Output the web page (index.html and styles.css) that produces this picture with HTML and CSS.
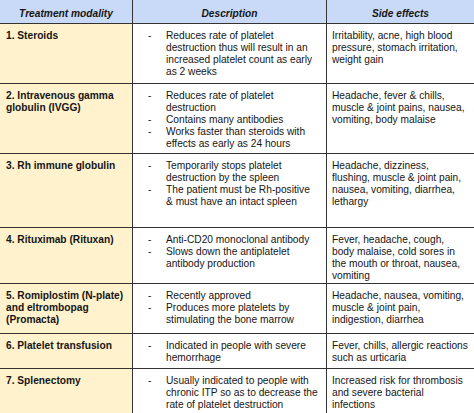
FILE: index.html
```html
<!DOCTYPE html>
<html>
<head>
<meta charset="utf-8">
<link rel="stylesheet" href="styles.css">
</head>
<body>
<table class="itp">
  <colgroup>
    <col class="c-mod">
    <col class="c-desc">
    <col class="c-side">
  </colgroup>
  <thead>
    <tr class="h0">
      <th>Treatment modality</th>
      <th>Description</th>
      <th>Side effects</th>
    </tr>
  </thead>
  <tbody>
    <tr class="r1">
      <td class="mod">1. Steroids</td>
      <td class="desc"><ul>
        <li><span class="dash">-</span><span>Reduces rate of platelet<br>destruction thus will result in an<br>increased platelet count as early<br>as 2 weeks</span></li>
      </ul></td>
      <td class="side">Irritability, acne, high blood<br>pressure, stomach irritation,<br>weight gain</td>
    </tr>
    <tr class="r2">
      <td class="mod">2. Intravenous gamma<br>globulin (IVGG)</td>
      <td class="desc"><ul>
        <li><span class="dash">-</span><span>Reduces rate of platelet<br>destruction</span></li>
        <li><span class="dash">-</span><span>Contains many antibodies</span></li>
        <li><span class="dash">-</span><span>Works faster than steroids with<br>effects as early as 24 hours</span></li>
      </ul></td>
      <td class="side">Headache, fever &amp; chills,<br>muscle &amp; joint pains, nausea,<br>vomiting, body malaise</td>
    </tr>
    <tr class="r3">
      <td class="mod">3. Rh immune globulin</td>
      <td class="desc"><ul>
        <li><span class="dash">-</span><span>Temporarily stops platelet<br>destruction by the spleen</span></li>
        <li><span class="dash">-</span><span>The patient must be Rh-positive<br>&amp; must have an intact spleen</span></li>
      </ul></td>
      <td class="side">Headache, dizziness,<br>flushing, muscle &amp; joint pain,<br>nausea, vomiting, diarrhea,<br>lethargy</td>
    </tr>
    <tr class="r4">
      <td class="mod">4. Rituximab (Rituxan)</td>
      <td class="desc"><ul>
        <li><span class="dash">-</span><span>Anti-CD20 monoclonal antibody</span></li>
        <li><span class="dash">-</span><span>Slows down the antiplatelet<br>antibody production</span></li>
      </ul></td>
      <td class="side">Fever, headache, cough,<br>body malaise, cold sores in<br>the mouth or throat, nausea,<br>vomiting</td>
    </tr>
    <tr class="r5">
      <td class="mod">5. Romiplostim (N-plate)<br>and eltrombopag<br>(Promacta)</td>
      <td class="desc"><ul>
        <li><span class="dash">-</span><span>Recently approved</span></li>
        <li><span class="dash">-</span><span>Produces more platelets by<br>stimulating the bone marrow</span></li>
      </ul></td>
      <td class="side">Headache, nausea, vomiting,<br>muscle &amp; joint pain,<br>indigestion, diarrhea</td>
    </tr>
    <tr class="r6">
      <td class="mod">6. Platelet transfusion</td>
      <td class="desc"><ul>
        <li><span class="dash">-</span><span>Indicated in people with severe<br>hemorrhage</span></li>
      </ul></td>
      <td class="side">Fever, chills, allergic reactions<br>such as urticaria</td>
    </tr>
    <tr class="r7">
      <td class="mod">7. Splenectomy</td>
      <td class="desc"><ul>
        <li><span class="dash">-</span><span>Usually indicated to people with<br>chronic ITP so as to decrease the<br>rate of platelet destruction</span></li>
      </ul></td>
      <td class="side">Increased risk for thrombosis<br>and severe bacterial<br>infections</td>
    </tr>
  </tbody>
</table>
</body>
</html>
```
FILE: styles.css
```css
html, body {
  margin: 0;
  padding: 0;
  background: #ffffff;
  overflow: hidden;
}

.itp {
  border-collapse: separate;
  border-spacing: 0;
  table-layout: fixed;
  width: 474px;
  font-family: "Liberation Sans", Arial, sans-serif;
  font-size: 10.2px;
  line-height: 12px;
  color: #151515;
}

.c-mod { width: 133px; }
.c-desc { width: 194px; }
.c-side { width: 147px; }

.itp th,
.itp td {
  padding: 0;
  vertical-align: top;
  border-bottom: 1px solid #333333;
}

.itp th:nth-child(1),
.itp th:nth-child(2),
.itp td:nth-child(1),
.itp td:nth-child(2) {
  border-right: 1px solid #333333;
}

.itp th {
  background: #c9daf8;
  font-weight: bold;
  font-style: italic;
  text-align: center;
  padding-top: 8px;
}

.itp .mod {
  background: #fff2cc;
  font-weight: bold;
  padding: 6px 2px 0 6px;
}

.itp .desc {
  padding: 6px 2px 0 15px;
}

.itp .side {
  padding: 6px 1px 0 5px;
}

.desc ul {
  list-style: none;
  margin: 0;
  padding: 0;
}

.desc li {
  display: flex;
}

.desc .dash {
  flex: 0 0 18px;
}

.h0 { height: 24px; }
.r1 { height: 60px; }
.r2 { height: 70px; }
.r3 { height: 74px; }
.r4 { height: 56px; }
.r5 { height: 50px; }
.r6 { height: 35px; }
.r7 { height: 50px; }
```
